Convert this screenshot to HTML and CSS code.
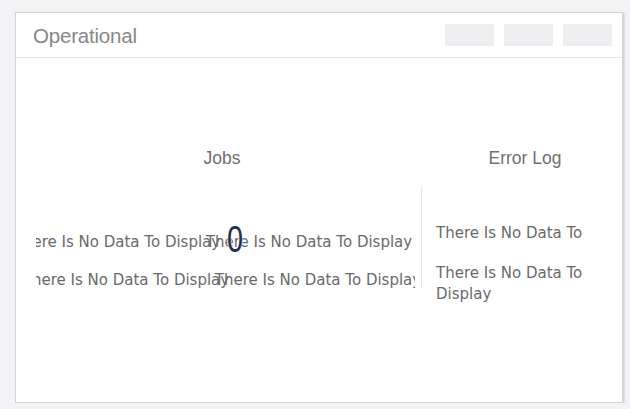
FILE: index.html
```html
<!DOCTYPE html>
<html>
<head>
<meta charset="utf-8">
<link rel="stylesheet" href="styles.css">
</head>
<body>
<div class="page">
  <div class="card">
    <div class="card-header">
      <div class="card-title">Operational</div>
      <div class="tools">
        <span class="tool"></span>
        <span class="tool"></span>
        <span class="tool"></span>
      </div>
    </div>
    <div class="card-body">
      <div class="panel jobs">
        <div class="panel-title">Jobs</div>
        <div class="jobs-content">
          <div class="jobs-clip">
            <div class="jobs-row">
              <div class="cell">There Is No Data To Display</div>
              <div class="cell">There Is No Data To Display</div>
            </div>
            <div class="jobs-row shifted">
              <div class="cell">There Is No Data To Display</div>
              <div class="cell">There Is No Data To Display</div>
            </div>
          </div>
          <div class="count">0</div>
        </div>
      </div>
      <div class="panel errors">
        <div class="panel-title">Error Log</div>
        <div class="error-content">
          <div class="error-row single">There Is No Data To Display</div>
          <div class="error-row">There Is No Data To Display</div>
        </div>
      </div>
    </div>
  </div>
</div>
</body>
</html>
```
FILE: styles.css
```css
html, body {
  margin: 0;
  padding: 0;
  background: #f3f2f5;
}
.page {
  padding: 12px 0 0 15px;
}
.card {
  width: 606px;
  height: 389px;
  background: #fff;
  border: 1px solid #d3d3d3;
  box-shadow: 1px 1px 2px rgba(0,0,0,0.18);
  overflow: hidden;
}
.card-header {
  height: 44px;
  border-bottom: 1px solid #e4e4e4;
  display: flex;
  align-items: center;
  justify-content: space-between;
  padding: 0 10px 0 17px;
}
.card-title {
  font-family: "Liberation Sans", Arial, sans-serif;
  font-size: 20.5px;
  color: #878787;
  letter-spacing: -0.2px;
  margin-top: 1px;
}
.tools {
  display: flex;
  gap: 10px;
}
.tool {
  display: block;
  width: 49px;
  height: 22px;
  background: #eeedf0;
}
.card-body {
  display: flex;
}
.panel-title {
  font-family: "Liberation Sans", Arial, sans-serif;
  font-size: 17.5px;
  line-height: 20px;
  color: #6f6f6f;
  text-align: center;
  padding-top: 90px;
  height: 20px;
  margin-bottom: 19px;
}
.jobs {
  width: 406px;
}
.jobs .panel-title {
  padding-left: 6px;
}
.jobs-content {
  position: relative;
  height: 100px;
  margin-left: 20px;
  padding-right: 6px;
  border-right: 1px solid #e6e6e6;
}
.jobs-clip {
  overflow: hidden;
  padding-top: 45px;
}
.jobs-row {
  display: grid;
  grid-template-columns: 198px 186px;
  margin-left: -18px;
  height: 20px;
  margin-bottom: 18px;
}
.jobs-row.shifted {
  margin-left: -9px;
}
.cell {
  font-family: "DejaVu Sans", Verdana, sans-serif;
  font-size: 15px;
  line-height: 20px;
  color: #6a6a6a;
  white-space: nowrap;
  display: flex;
  justify-content: center;
}
.count {
  position: absolute;
  left: 189px;
  top: 37px;
  font-family: "Liberation Sans", Arial, sans-serif;
  font-size: 36px;
  line-height: 32px;
  color: #22304f;
  transform: scaleX(0.8);
  text-shadow: 0 0 2px #fff, 0 0 2px #fff;
}
.errors {
  flex: 1;
}
.errors .panel-title {
  padding-left: 6px;
}
.error-content {
  padding: 36px 0 0 14px;
}
.error-row {
  font-family: "DejaVu Sans", Verdana, sans-serif;
  font-size: 15px;
  line-height: 21px;
  color: #6a6a6a;
  width: 184px;
}
.error-row.single {
  height: 21px;
  overflow: hidden;
  margin-bottom: 19px;
}
```
